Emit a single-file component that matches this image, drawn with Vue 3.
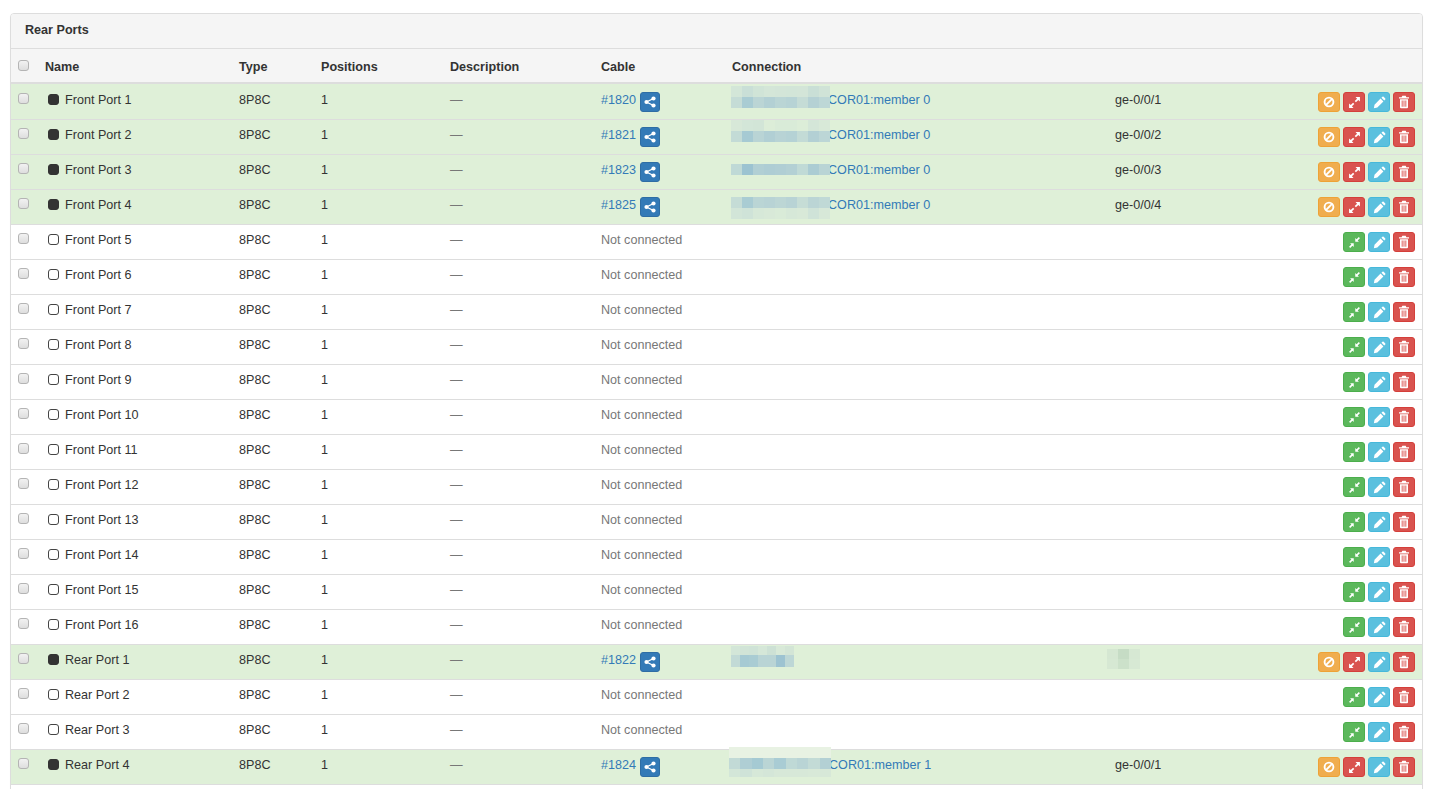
<template>
  <div class="page">
    <div class="panel">
      <div class="panel-heading"><strong>Rear Ports</strong></div>
      <table class="port-table">
        <colgroup>
          <col class="col-check" />
          <col class="col-name" />
          <col class="col-type" />
          <col class="col-pos" />
          <col class="col-desc" />
          <col class="col-cable" />
          <col class="col-conn" />
          <col class="col-peer" />
          <col />
        </colgroup>
        <thead>
          <tr>
            <th class="check"><input type="checkbox" /></th>
            <th>Name</th>
            <th>Type</th>
            <th>Positions</th>
            <th>Description</th>
            <th>Cable</th>
            <th>Connection</th>
            <th></th>
            <th></th>
          </tr>
        </thead>
        <tbody>
          <tr v-for="row in rows" :key="row.name" :class="{ success: row.cable }">
            <td class="check"><input type="checkbox" /></td>
            <td>
              <span class="status" :class="{ filled: row.cable }"></span>{{ row.name }}
            </td>
            <td>8P8C</td>
            <td>1</td>
            <td class="muted">—</td>
            <td v-if="!row.cable" class="muted" colspan="3">Not connected</td>
            <template v-else>
              <td>
                <a class="link">#{{ row.cable }}</a>
                <button class="btn primary share">
                  <svg viewBox="0 0 12 12" width="12" height="12">
                    <path d="M9.5 2.5 2.5 6l7 3.5" fill="none" stroke="#fff" stroke-width="1.3" />
                    <circle cx="9.5" cy="2.5" r="2.1" fill="#fff" />
                    <circle cx="2.5" cy="6" r="2.1" fill="#fff" />
                    <circle cx="9.5" cy="9.5" r="2.1" fill="#fff" />
                  </svg>
                </button>
              </td>
              <td class="conn">
                <div class="mosaic" :style="mosaicStyle(row.mosaic)">
                  <div
                    v-for="(band, b) in row.mosaic.bands"
                    :key="b"
                    class="band"
                    :style="{ height: band.h + 'px' }"
                  >
                    <i v-for="(c, k) in band.c" :key="k" :style="{ background: c }"></i>
                  </div>
                </div>
                <a v-if="row.member" class="link member" :class="{ shifted: row.shifted }">{{ row.member }}</a>
              </td>
              <td class="conn">
                <div v-if="row.peerMosaic" class="mosaic" :style="mosaicStyle(row.peerMosaic)">
                  <div
                    v-for="(band, b) in row.peerMosaic.bands"
                    :key="b"
                    class="band"
                    :style="{ height: band.h + 'px' }"
                  >
                    <i v-for="(c, k) in band.c" :key="k" :style="{ background: c }"></i>
                  </div>
                </div>
                {{ row.peer }}
              </td>
            </template>
            <td>
              <div class="actions">
                <template v-if="row.cable">
                  <button class="btn warning">
                    <svg viewBox="0 0 12 12" width="12" height="12">
                      <circle cx="6" cy="6" r="4.4" fill="none" stroke="#fff" stroke-width="1.9" />
                      <path d="M2.9 9.1 9.1 2.9" stroke="#fff" stroke-width="1.9" />
                    </svg>
                  </button>
                  <button class="btn danger">
                    <svg viewBox="0 0 12 12" width="13" height="13">
                      <path fill="#fff" d="M6.900 1H11v4.100L9.500 3.600 7.300 5.800 6.200 4.700 8.400 2.500zM5.100 11H1V6.900l1.500 1.500 2.200-2.200 1.100 1.100-2.200 2.200z" />
                    </svg>
                  </button>
                </template>
                <button v-else class="btn success-btn">
                  <svg viewBox="0 0 12 12" width="13" height="13">
                    <path fill="#fff" d="M6.700 5.300V1.900l1.200 1.200L10 1l1 1-2.100 2.100 1.200 1.200zM5.300 6.700v3.400L4.100 8.900 2 11l-1-1 2.100-2.100-1.200-1.200z" />
                  </svg>
                </button>
                <button class="btn info">
                  <svg viewBox="0 0 12 12" width="13" height="13">
                    <path fill="#fff" d="M.8 11.200l.6-3.200L7 2.400 9.600 5 4 10.600zM7.800 1.600l.9-.9a.8.8 0 0 1 1.100 0l1.500 1.500a.8.8 0 0 1 0 1.100l-.9.9z" />
                  </svg>
                </button>
                <button class="btn danger">
                  <svg viewBox="0 0 12 14" width="12" height="14">
                    <path
                      fill="#fff"
                      fill-rule="evenodd"
                      d="M4.300.7h3.400l.7 1.600H11v1.200H1V2.300h2.600zM2 4.300h8v7.900a1 1 0 0 1-1 1H3a1 1 0 0 1-1-1zM3.700 5.500v6.300h.9V5.500zM5.550 5.500v6.300h.9V5.500zM7.400 5.500v6.300h.9V5.500z"
                    />
                  </svg>
                </button>
              </div>
            </td>
          </tr>
        </tbody>
      </table>
    </div>
  </div>
</template>

<script setup>
const BG = '#dff0d8'

const light1 = ['#d3e6d8', '#c9dfd7', '#d0e4d7', '#d4e6d8', '#d3e5d8', '#d2e5d8', '#d3e5d8', '#c9dfd6', '#d0e3d7']
const dark1 = ['#c5dcd6', '#a9ccd3', '#bbd5d5', '#b3d0d4', '#bad5d5', '#b7d3d5', '#c5dcd6', '#b5d1d4', '#bdd7d6']
const light2 = ['#d7e8d8', '#d3e6d8', '#d2e5d7', '#dcedd8', '#d9ebd8', '#d9ebd8', '#dcedd8', '#d4e6d8', '#d8e9d8']
const dark2 = ['#c3dbd6', '#a6cad3', '#b9d4d5', '#b1cfd4', '#b8d3d5', '#b5d2d5', '#c3dbd6', '#b3d0d4', '#bcd6d6']
const dark3 = ['#bfd9d6', '#9cc3d1', '#b1cfd4', '#aecdd4', '#b0ced4', '#b3d0d4', '#c0dad6', '#abccd3', '#b9d4d5']
const dark4 = ['#c5dcd6', '#a9ccd3', '#bad5d5', '#b8d3d5', '#bcd6d5', '#b8d3d5', '#c6ddd6', '#bbd5d5', '#c0d9d6']
const light4 = ['#d2e5d8', '#cfe3d8', '#d6e8d8', '#d8e9d8', '#d9ebd8', '#d6e8d8', '#d8e9d8', '#cfe3d8', '#d7e8d8']
const top8 = Array(9).fill('#e8f2e3')
const dark8 = ['#c2dad6', '#afced4', '#a5cad3', '#bad5d5', '#a9ccd4', '#bfd9d6', '#b9d4d5', '#c3dbd6', '#b3d0d4']
const light8 = ['#d3e6d8', '#cfe3d8', '#d6e8d8', '#d4e6d8', '#d7e8d8', '#d7e8d8', '#d7e8d8', '#d8e9d8', '#d7e8d8']

const flat = (n, c) => Array(n).fill(c)

const mosaics = {
  1820: { top: 2, left: 7, w: 99, bands: [{ h: 11, c: light1 }, { h: 11, c: dark1 }] },
  1821: { top: 0, left: 7, w: 99, bands: [{ h: 11, c: light2 }, { h: 11, c: dark2 }] },
  1823: { top: 0, left: 7, w: 99, bands: [{ h: 9, c: flat(9, BG) }, { h: 11, c: dark3 }] },
  1825: { top: 0, left: 7, w: 99, bands: [{ h: 7, c: flat(9, BG) }, { h: 11, c: dark4 }, { h: 11, c: light4 }] },
  1822: {
    top: 1,
    left: 7,
    w: 63,
    bands: [
      { h: 9, c: ['#d3e6d8', '#d1e4d7', '#cfe3d7', '#d5e7d8', '#cde1d5', '#d8e9d8', '#d3e5d6'] },
      { h: 12, c: ['#c2dad6', '#a6cad3', '#a9ccd3', '#b9d4d5', '#b9d4d5', '#9dc3d1', '#bdd7d6'] }
    ]
  },
  1824: { top: -3, left: 5, w: 102, bands: [{ h: 11, c: top8 }, { h: 11, c: dark8 }, { h: 8, c: light8 }] }
}

const peerMosaic = {
  top: 4,
  left: 0,
  w: 33,
  bands: [
    { h: 10, c: ['#d5e7d2', '#c6dcc5', '#d6e8d3'] },
    { h: 10, c: ['#d6e8d3', '#cce1ca', '#d7e9d4'] }
  ]
}

function mosaicStyle(m) {
  return { top: m.top + 'px', left: m.left + 'px', width: m.w + 'px' }
}

function port(name, cable, member, peer) {
  return { name, cable, member, peer, mosaic: mosaics[cable] }
}

const rows = [
  port('Front Port 1', 1820, 'COR01:member 0', 'ge-0/0/1'),
  port('Front Port 2', 1821, 'COR01:member 0', 'ge-0/0/2'),
  port('Front Port 3', 1823, 'COR01:member 0', 'ge-0/0/3'),
  port('Front Port 4', 1825, 'COR01:member 0', 'ge-0/0/4')
]
for (let i = 5; i <= 16; i++) rows.push(port('Front Port ' + i))
rows.push({ ...port('Rear Port 1', 1822), peerMosaic })
rows.push(port('Rear Port 2'))
rows.push(port('Rear Port 3'))
rows.push({ ...port('Rear Port 4', 1824, 'COR01:member 1', 'ge-0/0/1'), shifted: true })
</script>

<style scoped>
.page {
  height: 789px;
  overflow: hidden;
  padding: 13px 26px 0 10px;
  box-sizing: border-box;
  font-family: "Liberation Sans", Arial, sans-serif;
  font-size: 12.6px;
  color: #333;
}

.panel {
  border: 1px solid #ddd;
  border-radius: 4px 4px 0 0;
  box-shadow: 0 1px 1px rgba(0, 0, 0, 0.05);
  padding-bottom: 40px;
}

.panel-heading {
  height: 34px;
  line-height: 32px;
  padding-left: 14px;
  background: #f5f5f5;
  border-bottom: 1px solid #ddd;
  border-radius: 3px 3px 0 0;
}

.port-table {
  width: 100%;
  table-layout: fixed;
  border-collapse: separate;
  border-spacing: 0;
}

.col-check { width: 26px; }
.col-name { width: 194px; }
.col-type { width: 82px; }
.col-pos { width: 129px; }
.col-desc { width: 151px; }
.col-cable { width: 131px; }
.col-conn { width: 383px; }
.col-peer { width: 130px; }

th {
  height: 35px;
  box-sizing: border-box;
  padding: 3px 8px 0;
  text-align: left;
  font-weight: bold;
  background: #f5f5f5;
  border-bottom: 2px solid #ddd;
}

td {
  height: 35px;
  box-sizing: border-box;
  padding: 6px 8px 0;
  vertical-align: top;
  line-height: 18px;
  border-top: 1px solid #ddd;
  white-space: nowrap;
}

tbody tr:first-child td {
  border-top: 0;
  padding-top: 7px;
}

tbody tr:last-child td {
  border-bottom: 1px solid #ddd;
  height: 36px;
}

.success td {
  background: #dff0d8;
}

.check {
  padding-left: 7px;
  padding-right: 0;
}

input[type="checkbox"] {
  appearance: none;
  display: block;
  width: 11px;
  height: 11px;
  margin: 2px 0 0;
  box-sizing: border-box;
  border: 1px solid #b4b4b4;
  border-radius: 3px;
  background: linear-gradient(#f2f2f2, #dedede);
}

th input[type="checkbox"] {
  margin: -4px 0 0;
}

.muted {
  color: #777;
}

.link {
  color: #337ab7;
  text-decoration: none;
}

.status {
  display: inline-block;
  box-sizing: border-box;
  width: 11px;
  height: 11px;
  margin: 0 6px 0 3px;
  vertical-align: -1px;
  border: 1px solid #444;
  border-radius: 3px;
}

.status.filled {
  background: #333;
  border-color: #333;
}

.conn {
  position: relative;
}

.member {
  padding-left: 96px;
}

.member.shifted {
  padding-left: 97px;
}

.mosaic {
  position: absolute;
  z-index: 1;
}

.band {
  display: flex;
}

.band i {
  flex: 1;
}

.actions {
  display: flex;
  justify-content: flex-end;
  gap: 3px;
  margin: 1px -1px 0 0;
}

.btn {
  display: inline-flex;
  align-items: center;
  justify-content: center;
  width: 22px;
  height: 20px;
  padding: 0;
  border: 1px solid transparent;
  border-radius: 3px;
  box-sizing: border-box;
}

.share {
  width: 20px;
  margin-left: 4px;
  vertical-align: top;
  margin-top: 1px;
}

.primary { background: #337ab7; border-color: #2e6da4; }
.warning { background: #f0ad4e; border-color: #eea236; }
.danger { background: #d9534f; border-color: #d43f3a; }
.info { background: #5bc0de; border-color: #46b8da; }
.success-btn { background: #5cb85c; border-color: #4cae4c; }
</style>

<style>
html, body {
  margin: 0;
  overflow: hidden;
  background: #fff;
}
</style>
